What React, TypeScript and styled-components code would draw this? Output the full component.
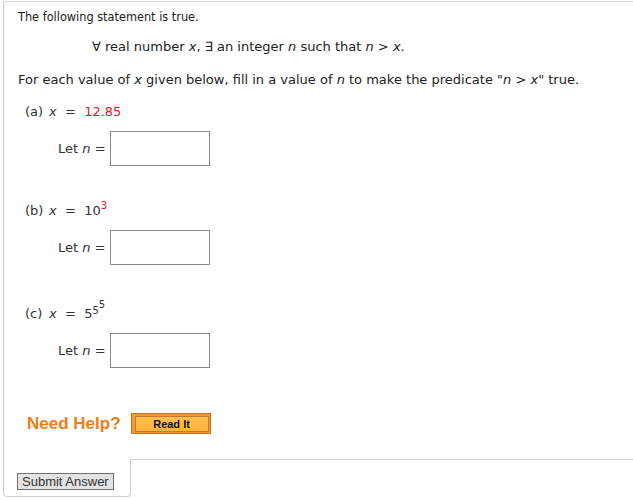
import React from "react";
import styled, { createGlobalStyle } from "styled-components";

const GlobalStyle = createGlobalStyle`
  html, body { margin: 0; padding: 0; background: #ffffff; }
  body { font-family: "DejaVu Sans", Verdana, sans-serif; color: #222; }
`;

const Page = styled.div`
  width: 630px;
  padding: 1px 0 0 3px;
`;

const Panel = styled.div`
  border-top: 1px solid #dcdcdc;
  border-left: 1px solid #cfcfcf;
  padding: 7px 0 0 14px;
  height: 458px;
  box-sizing: border-box;
`;

const Text = styled.p<{ $top?: number; $indent?: number; $narrow?: boolean }>`
  margin: ${(p) => p.$top ?? 0}px 0 0 ${(p) => p.$indent ?? 0}px;
  font-family: ${(p) =>
    p.$narrow ? '"DejaVu Sans Condensed", "DejaVu Sans", sans-serif' : '"DejaVu Sans", Verdana, sans-serif'};
  font-size: ${(p) => (p.$narrow ? 12.6 : 13)}px;
  line-height: 16px;
  color: #222;
`;

const Var = styled.i`
  font-style: italic;
`;

const Part = styled.div<{ $top: number }>`
  margin-top: ${(p) => p.$top}px;
  padding-left: 7px;
`;

const Header = styled.div`
  font-family: "DejaVu Sans", Verdana, sans-serif;
  font-size: 13px;
  line-height: 16px;
  color: #333;
  display: flex;
  align-items: baseline;
  white-space: pre;
`;

const Label = styled.span`
  width: 24px;
`;

const Red = styled.span`
  color: #e8151b;
`;

const Sup = styled.span<{ $red?: boolean; $raise: number }>`
  font-size: 10px;
  line-height: 0;
  vertical-align: ${(p) => p.$raise}px;
  color: ${(p) => (p.$red ? "#e8151b" : "#333")};
`;

const AnswerRow = styled.div`
  display: flex;
  align-items: center;
  margin: 11px 0 0 33px;
  font-family: "DejaVu Sans", Verdana, sans-serif;
  font-size: 13px;
  color: #333;
  white-space: pre;
`;

const AnswerInput = styled.input`
  width: 100px;
  height: 35px;
  box-sizing: border-box;
  margin: 0 0 0 4px;
  border: 1px solid #8a8a8a;
  background: #fff;
  padding: 0 4px;
  font-size: 13px;
  outline: none;
`;

const HelpRow = styled.div`
  display: flex;
  align-items: center;
  margin: 45px 0 0 9px;
  gap: 10px;
`;

const HelpTitle = styled.span`
  font-family: "Liberation Sans", Arial, sans-serif;
  font-weight: bold;
  font-size: 17px;
  color: #ee7e14;
`;

const ReadButton = styled.button`
  width: 80px;
  height: 21px;
  padding: 2px 1px 1px 3px;
  box-sizing: border-box;
  border: 1px solid #c0712a;
  background: #f69b2e;
  cursor: pointer;
  display: flex;
`;

const ReadInner = styled.span`
  flex: 1;
  border: 1px solid #c47a30;
  background: linear-gradient(#ffc04e, #ffb23a);
  font-family: "Liberation Sans", Arial, sans-serif;
  font-weight: bold;
  font-size: 11px;
  line-height: 14px;
  color: #111;
  text-align: center;
`;

const Footer = styled.div`
  display: flex;
  height: 38px;
`;

const SubmitTab = styled.div`
  width: 128px;
  border-left: 1px solid #cfcfcf;
  border-right: 1px solid #cfcfcf;
  border-bottom: 1px solid #cfcfcf;
  border-radius: 0 0 4px 4px;
  padding: 12px 0 0 13px;
  box-sizing: border-box;
`;

const Filler = styled.div`
  flex: 1;
  border-top: 1px solid #cfcfcf;
`;

const SubmitButton = styled.button`
  height: 17px;
  padding: 0 4px;
  border: 1px solid #6f6f6f;
  background: #e3e3e3;
  font-family: "Liberation Sans", Arial, sans-serif;
  font-size: 13px;
  line-height: 15px;
  color: #333;
  cursor: pointer;
`;

type PartData = {
  label: string;
  top: number;
  value: React.ReactNode;
};

const parts: PartData[] = [
  { label: "(a)", top: 16, value: <Red>12.85</Red> },
  {
    label: "(b)",
    top: 37,
    value: (
      <span>
        10<Sup $red $raise={6}>3</Sup>
      </span>
    ),
  },
  {
    label: "(c)",
    top: 40,
    value: (
      <span>
        5<Sup $raise={4}>5</Sup>
        <Sup $raise={10}>5</Sup>
      </span>
    ),
  },
];

export default function App() {
  return (
    <Page>
      <GlobalStyle />
      <Panel>
        <Text $narrow>The following statement is true.</Text>
        <Text $top={14} $indent={74}>
          ∀ real number <Var>x</Var>, ∃ an integer <Var>n</Var> such that <Var>n</Var> &gt; <Var>x</Var>.
        </Text>
        <Text $top={17}>
          For each value of <Var>x</Var> given below, fill in a value of <Var>n</Var> to make the predicate "
          <Var>n</Var> &gt; <Var>x</Var>" true.
        </Text>
        {parts.map((p) => (
          <Part key={p.label} $top={p.top}>
            <Header>
              <Label>{p.label}</Label>
              <Var>x</Var>
              {"  =  "}
              {p.value}
            </Header>
            <AnswerRow>
              Let <Var>n</Var> =
              <AnswerInput type="text" aria-label={`answer ${p.label}`} />
            </AnswerRow>
          </Part>
        ))}
        <HelpRow>
          <HelpTitle>Need Help?</HelpTitle>
          <ReadButton type="button">
            <ReadInner>Read It</ReadInner>
          </ReadButton>
        </HelpRow>
      </Panel>
      <Footer>
        <SubmitTab>
          <SubmitButton type="button">Submit Answer</SubmitButton>
        </SubmitTab>
        <Filler />
      </Footer>
    </Page>
  );
}
